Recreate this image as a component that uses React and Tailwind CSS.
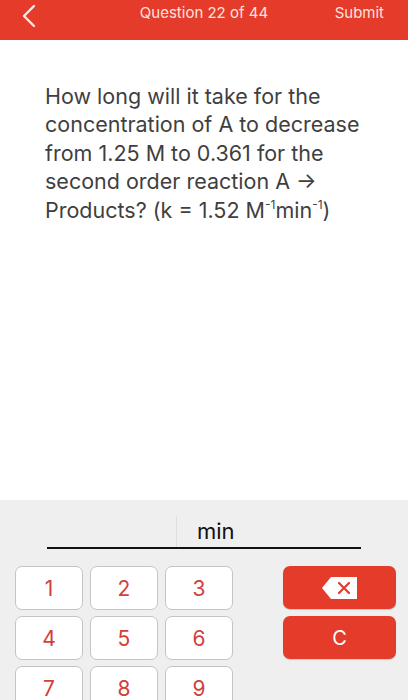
import React from "react";

const F = { fontFamily: "Inter, 'Liberation Sans', sans-serif" };

function Key({ label }) {
  return (
    <div className="w-[68px] h-[44px] bg-white border-[1.5px] border-[#c4c4c4] rounded-[7px] flex items-center justify-center text-[21px] text-[#d2403a] leading-none">
      {label}
    </div>
  );
}

export default function App() {
  return (
    <div className="w-[408px] h-[700px] bg-white flex flex-col overflow-hidden" style={F}>
      <div className="h-[40px] bg-[#e53b2b] flex items-start relative shrink-0">
        <svg className="absolute left-[20px] top-[4px]" width="18" height="24" viewBox="0 0 18 24">
          <path d="M14 2 L4 12 L14 22" stroke="#fbe9e6" strokeWidth="2.4" fill="none" strokeLinecap="round" strokeLinejoin="round" />
        </svg>
        <div className="w-full text-center text-[15px] text-[#fbe3df] pt-[3px] leading-[20px]">Question 22 of 44</div>
        <div className="absolute right-[24px] top-[3px] text-[15px] text-[#fbe3df] leading-[20px]">Submit</div>
      </div>

      <div className="flex-1 pl-[45px] pt-[42px] text-[21.5px] leading-[28.4px] text-[#3f3f3f] whitespace-nowrap">
        How long will it take for the<br />
        concentration of A to decrease<br />
        from 1.25 M to 0.361 for the<br />
        second order reaction A →<br />
        Products? (k = 1.52 M<span className="text-[12px] relative top-[-9px]">-1</span>min<span className="text-[12px] relative top-[-9px]">-1</span>)
      </div>

      <div className="h-[200px] bg-[#efefef] shrink-0 flex flex-col">
        <div className="mx-[47px] mt-[16px] h-[38px] border-b-2 border-[#111] flex items-center">
          <div className="w-[130px] h-[31px] border-r border-[#dedede]"></div>
          <div className="pl-[20px] text-[22px] text-[#111] leading-none pb-[2px]">min</div>
        </div>
        <div className="flex mt-[17px] pl-[15px]">
          <div className="grid grid-cols-3 gap-x-[7px] gap-y-[6px] w-[218px]">
            {["1","2","3","4","5","6","7","8","9"].map((k) => (
              <Key key={k} label={k} />
            ))}
          </div>
          <div className="ml-[50px] flex flex-col gap-[7px]">
            <div className="w-[113px] h-[43px] bg-[#e53b2b] rounded-[7px] flex items-center justify-center shadow-[0_1px_1px_rgba(0,0,0,0.15)]">
              <svg width="36" height="22" viewBox="0 0 36 22">
                <path d="M9 0 H35 V22 H9 L0 11 Z" fill="#ffffff" />
                <path d="M17 6 L27 16 M27 6 L17 16" stroke="#e53b2b" strokeWidth="2.2" strokeLinecap="round" />
              </svg>
            </div>
            <div className="w-[113px] h-[43px] bg-[#e53b2b] rounded-[7px] flex items-center justify-center text-[20px] text-white shadow-[0_1px_1px_rgba(0,0,0,0.15)]">
              C
            </div>
          </div>
        </div>
      </div>
    </div>
  );
}
